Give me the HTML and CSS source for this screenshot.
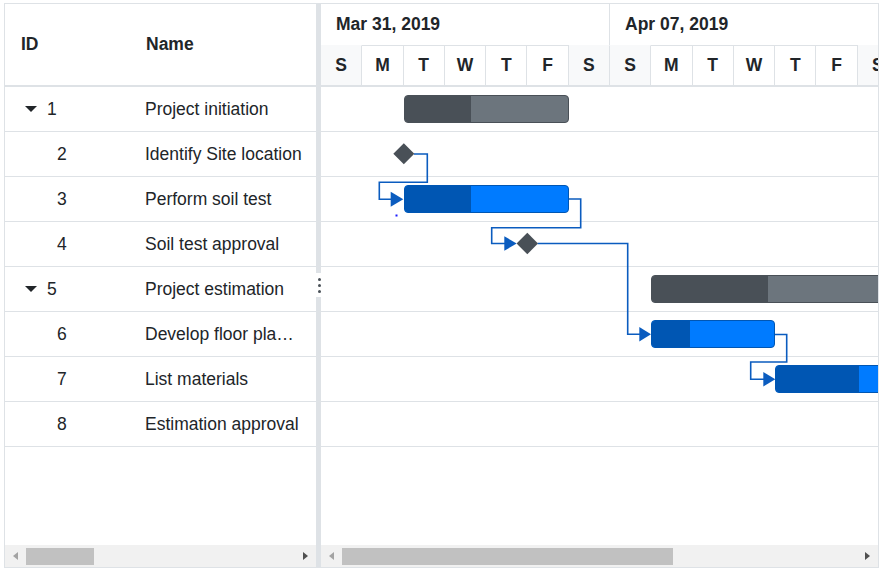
FILE: index.html
```html
<!DOCTYPE html>
<html lang="en">
<head>
<meta charset="utf-8">
<title>Gantt</title>
<link rel="stylesheet" href="styles.css">
</head>
<body>
<div class="gantt">
  <div class="grid-pane">
    <div class="grid-header">
      <div class="gh-id">ID</div>
      <div class="gh-name">Name</div>
    </div>
    <div class="grid-body">
      <div class="grid-row"><div class="cell-id"><span class="caret"></span>1</div><div class="cell-name">Project initiation</div></div>
      <div class="grid-row"><div class="cell-id"><span class="indent"></span>2</div><div class="cell-name">Identify Site location</div></div>
      <div class="grid-row"><div class="cell-id"><span class="indent"></span>3</div><div class="cell-name">Perform soil test</div></div>
      <div class="grid-row"><div class="cell-id"><span class="indent"></span>4</div><div class="cell-name">Soil test approval</div></div>
      <div class="grid-row"><div class="cell-id"><span class="caret"></span>5</div><div class="cell-name">Project estimation</div></div>
      <div class="grid-row"><div class="cell-id"><span class="indent"></span>6</div><div class="cell-name">Develop floor plan for estimation</div></div>
      <div class="grid-row"><div class="cell-id"><span class="indent"></span>7</div><div class="cell-name">List materials</div></div>
      <div class="grid-row"><div class="cell-id"><span class="indent"></span>8</div><div class="cell-name">Estimation approval</div></div>
    </div>
    <div class="hscroll">
      <div class="sb-btn"><span class="arrow-left"></span></div>
      <div class="sb-track"><div class="thumb thumb-grid"></div></div>
      <div class="sb-btn"><span class="arrow-right"></span></div>
    </div>
  </div>

  <div class="splitter"><div class="grip"><i></i><i></i><i></i></div></div>

  <div class="chart-pane">
    <div class="timeline">
      <div class="tl-top">
        <div class="week">Mar 31, 2019</div>
        <div class="week">Apr 07, 2019</div>
      </div>
      <div class="tl-days">
        <div class="day we">S</div><div class="day">M</div><div class="day">T</div><div class="day">W</div><div class="day">T</div><div class="day">F</div><div class="day we">S</div>
        <div class="day we">S</div><div class="day">M</div><div class="day">T</div><div class="day">W</div><div class="day">T</div><div class="day">F</div><div class="day we">S</div>
      </div>
    </div>
    <div class="chart-body">
      <div class="chart-row"></div>
      <div class="chart-row"></div>
      <div class="chart-row"></div>
      <div class="chart-row"></div>
      <div class="chart-row"></div>
      <div class="chart-row"></div>
      <div class="chart-row"></div>
      <div class="chart-row"></div>

      <svg class="links" width="557" height="458" viewBox="0 0 557 458" xmlns="http://www.w3.org/2000/svg">
        <g fill="none" stroke="#0b5cbf" stroke-width="1.6">
          <path d="M93 67 H106.3 V95.3 H58.3 V112.2 H71"/>
          <path d="M248 112 H259.7 V140.7 H170.7 V156.5 H184"/>
          <path d="M216.5 156.5 H306.7 V247.3 H319"/>
          <path d="M454 247.5 H465.7 V275 H429.7 V292.3 H443"/>
        </g>
        <g fill="#0b5cbf">
          <polygon points="69.7,104.7 82.3,112.2 69.7,119.7"/>
          <polygon points="183.3,149.3 195.7,156.5 183.3,163.7"/>
          <polygon points="318.3,240 330,247.3 318.3,254.6"/>
          <polygon points="442.3,285 454.3,292.3 442.3,299.6"/>
        </g>
        <g fill="#495057">
          <polygon points="82.8,56.3 93.3,66.8 82.8,77.3 72.3,66.8"/>
          <polygon points="206.3,145.8 217,156.5 206.3,167.2 195.6,156.5"/>
        </g>
        <rect x="74.5" y="127.5" width="2" height="2" fill="#1a1aff"/>
      </svg>

      <div class="bar summary" style="left:83px;top:8px;width:165px"><div class="progress" style="width:66px"></div></div>
      <div class="bar task" style="left:83px;top:98px;width:165px"><div class="progress" style="width:66px"></div></div>
      <div class="bar summary" style="left:330px;top:188px;width:320px"><div class="progress" style="width:116px"></div></div>
      <div class="bar task" style="left:330px;top:233px;width:124px"><div class="progress" style="width:38px"></div></div>
      <div class="bar task" style="left:454px;top:278px;width:200px"><div class="progress" style="width:83px"></div></div>
    </div>
    <div class="hscroll">
      <div class="sb-btn"><span class="arrow-left"></span></div>
      <div class="sb-track"><div class="thumb thumb-chart"></div></div>
      <div class="sb-btn"><span class="arrow-right"></span></div>
    </div>
  </div>
</div>
</body>
</html>
```

FILE: styles.css
```css
html, body {
  margin: 0;
  padding: 0;
  background: #ffffff;
}

body {
  font-family: "Liberation Sans", Arial, sans-serif;
  font-size: 17.5px;
  color: #212529;
}

.gantt {
  margin: 3px 0 0 4px;
  width: 875px;
  height: 565px;
  box-sizing: border-box;
  border: 1px solid #dee2e6;
  display: flex;
  overflow: hidden;
}

/* ---------- left grid ---------- */
.grid-pane {
  width: 311px;
  flex: none;
  display: flex;
  flex-direction: column;
}

.grid-header {
  height: 83px;
  flex: none;
  box-sizing: border-box;
  border-bottom: 2px solid #dee2e6;
  display: flex;
  align-items: center;
  font-weight: bold;
}

.gh-id {
  width: 132px;
  box-sizing: border-box;
  padding-left: 16px;
}

.gh-name {
  padding-left: 9px;
}

.grid-body {
  flex: 1;
  overflow: hidden;
}

.grid-row {
  height: 45px;
  box-sizing: border-box;
  border-bottom: 1px solid #dee2e6;
  display: flex;
  align-items: center;
}

.cell-id {
  width: 132px;
  flex: none;
  box-sizing: border-box;
  padding-left: 20px;
  display: flex;
  align-items: center;
}

.caret {
  width: 0;
  height: 0;
  border-left: 6px solid transparent;
  border-right: 6px solid transparent;
  border-top: 6px solid #212529;
  margin-right: 10px;
}

.indent {
  width: 32px;
  flex: none;
}

.cell-name {
  width: 179px;
  flex: none;
  box-sizing: border-box;
  padding: 0 13px 0 8px;
  white-space: nowrap;
  overflow: hidden;
  text-overflow: ellipsis;
}

/* ---------- splitter ---------- */
.splitter {
  width: 5px;
  flex: none;
  background: #dee2e6;
}

.grip {
  margin-top: 269px;
  height: 24px;
  background: #ffffff;
  display: flex;
  flex-direction: column;
  align-items: center;
  justify-content: center;
  gap: 3px;
}

.grip i {
  display: block;
  width: 3px;
  height: 3px;
  border-radius: 50%;
  background: #495057;
  margin-left: 1px;
}

/* ---------- chart ---------- */
.chart-pane {
  width: 557px;
  flex: none;
  display: flex;
  flex-direction: column;
  overflow: hidden;
}

.timeline {
  height: 83px;
  flex: none;
  box-sizing: border-box;
  border-bottom: 2px solid #dee2e6;
  font-weight: bold;
  overflow: hidden;
}

.tl-top {
  height: 41px;
  display: flex;
}

.week {
  width: 289px;
  flex: none;
  box-sizing: border-box;
  border-right: 1px solid #dee2e6;
  padding-left: 15px;
  display: flex;
  align-items: center;
  white-space: nowrap;
}

.tl-days {
  height: 40px;
  display: flex;
}

.day {
  width: 41.2857px;
  flex: none;
  box-sizing: border-box;
  border-top: 1px solid #dee2e6;
  border-right: 1px solid #dee2e6;
  display: flex;
  align-items: center;
  justify-content: center;
}

.day.we {
  background: #f8f9fa;
  border-top-color: #f8f9fa;
}

.chart-body {
  flex: 1;
  position: relative;
  overflow: hidden;
}

.chart-row {
  height: 45px;
  box-sizing: border-box;
  border-bottom: 1px solid #dee2e6;
}

.links {
  position: absolute;
  left: 0;
  top: 0;
}

.bar {
  position: absolute;
  height: 28px;
  box-sizing: border-box;
  border: 1px solid;
  border-radius: 4px;
  overflow: hidden;
}

.bar .progress {
  height: 100%;
}

.bar.summary {
  background: #6c757d;
  border-color: #495057;
}

.bar.summary .progress {
  background: #495057;
}

.bar.task {
  background: #007bff;
  border-color: #0056b3;
}

.bar.task .progress {
  background: #0056b3;
}

/* ---------- scrollbars ---------- */
.hscroll {
  height: 22px;
  flex: none;
  background: #f1f1f1;
  display: flex;
  align-items: center;
}

.sb-btn {
  width: 21px;
  height: 22px;
  flex: none;
  display: flex;
  align-items: center;
  justify-content: center;
}

.arrow-left {
  width: 0;
  height: 0;
  border-top: 4.5px solid transparent;
  border-bottom: 4.5px solid transparent;
  border-right: 5px solid #a3a3a3;
}

.arrow-right {
  width: 0;
  height: 0;
  border-top: 4.5px solid transparent;
  border-bottom: 4.5px solid transparent;
  border-left: 5px solid #505050;
}

.sb-track {
  flex: 1;
  height: 100%;
  display: flex;
  align-items: center;
}

.thumb {
  height: 17px;
  background: #c1c1c1;
}

.thumb-grid {
  width: 68px;
}

.thumb-chart {
  width: 331px;
}
```
